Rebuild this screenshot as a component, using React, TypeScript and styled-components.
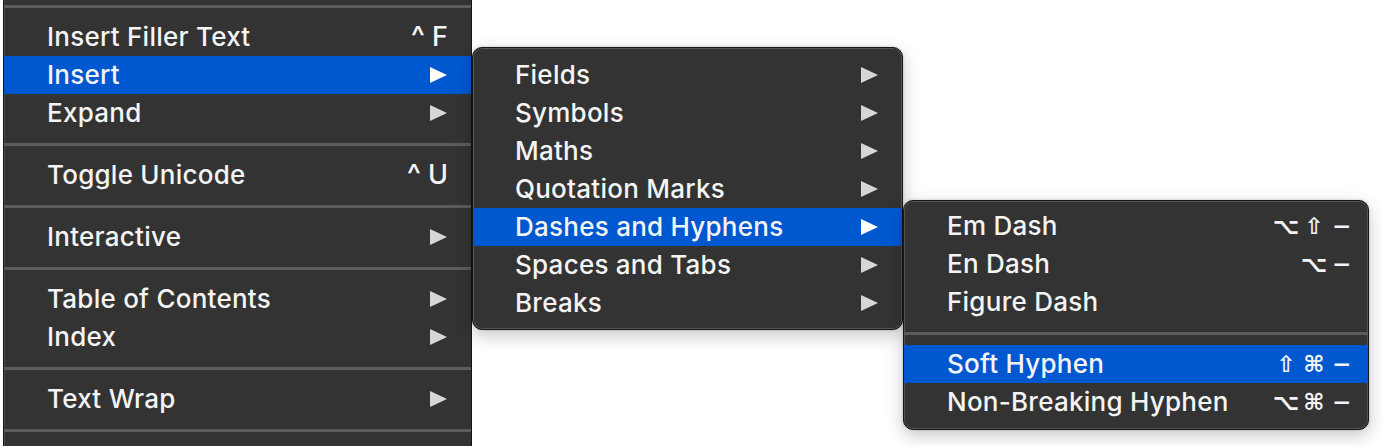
import styled, { createGlobalStyle } from "styled-components";

const GlobalStyle = createGlobalStyle`
  html, body {
    margin: 0;
    padding: 0;
    background: #ffffff;
  }
  body {
    font-family: "Inter", "Noto Sans", "DejaVu Sans", sans-serif;
    -webkit-font-smoothing: antialiased;
  }
`;

type Row =
  | { kind: "sep" }
  | { kind: "item"; label: string; keys?: string[]; sub?: boolean; active?: boolean };

const mainRows: Row[] = [
  { kind: "sep" },
  { kind: "item", label: "Insert Filler Text", keys: ["^", "F"] },
  { kind: "item", label: "Insert", sub: true, active: true },
  { kind: "item", label: "Expand", sub: true },
  { kind: "sep" },
  { kind: "item", label: "Toggle Unicode", keys: ["^", "U"] },
  { kind: "sep" },
  { kind: "item", label: "Interactive", sub: true },
  { kind: "sep" },
  { kind: "item", label: "Table of Contents", sub: true },
  { kind: "item", label: "Index", sub: true },
  { kind: "sep" },
  { kind: "item", label: "Text Wrap", sub: true },
  { kind: "sep" },
  { kind: "item", label: "" },
];

const insertRows: Row[] = [
  { kind: "item", label: "Fields", sub: true },
  { kind: "item", label: "Symbols", sub: true },
  { kind: "item", label: "Maths", sub: true },
  { kind: "item", label: "Quotation Marks", sub: true },
  { kind: "item", label: "Dashes and Hyphens", sub: true, active: true },
  { kind: "item", label: "Spaces and Tabs", sub: true },
  { kind: "item", label: "Breaks", sub: true },
];

const dashRows: Row[] = [
  { kind: "item", label: "Em Dash", keys: ["⌥", "⇧", "−"] },
  { kind: "item", label: "En Dash", keys: ["⌥", "−"] },
  { kind: "item", label: "Figure Dash" },
  { kind: "sep" },
  { kind: "item", label: "Soft Hyphen", keys: ["⇧", "⌘", "−"], active: true },
  { kind: "item", label: "Non-Breaking Hyphen", keys: ["⌥", "⌘", "−"] },
];

function Arrow() {
  return (
    <ArrowSvg width="17" height="16" viewBox="0 0 17 16">
      <polygon points="0,0 17,8 0,16" fill="currentColor" />
    </ArrowSvg>
  );
}

function Keys({ keys, caret }: { keys: string[]; caret: boolean }) {
  if (caret) {
    return (
      <KeyGroup>
        <Caret>^</Caret>
        <Letter>{keys[1]}</Letter>
      </KeyGroup>
    );
  }
  return (
    <KeyGroup>
      {keys.map((k, i) => (
        <Glyph key={i} $last={i === keys.length - 1}>
          {k}
        </Glyph>
      ))}
    </KeyGroup>
  );
}

function MenuRows({ rows }: { rows: Row[] }) {
  return (
    <>
      {rows.map((r, i) =>
        r.kind === "sep" ? (
          <Separator key={i}>
            <Line />
          </Separator>
        ) : (
          <Item key={i} $active={!!r.active}>
            <Label>{r.label}</Label>
            {r.keys && <Keys keys={r.keys} caret={r.keys[0] === "^"} />}
            {r.sub && <Arrow />}
          </Item>
        )
      )}
    </>
  );
}

export default function App() {
  return (
    <>
      <GlobalStyle />
      <Stage>
        <MainMenu>
          <MenuRows rows={mainRows} />
        </MainMenu>
        <SubMenu $top={47} $width={431} $pad="8px 0 7px" $indent={42} $right={23}>
          <MenuRows rows={insertRows} />
        </SubMenu>
        <SubMenu $top={200} $width={466} $pad="6px 0 8px" $indent={43} $right={20}>
          <MenuRows rows={dashRows} />
        </SubMenu>
      </Stage>
    </>
  );
}

const Stage = styled.div`
  width: 1382px;
  height: 446px;
  overflow: hidden;
  display: flex;
  align-items: flex-start;
  padding-left: 3px;
  box-sizing: border-box;
`;

const MainMenu = styled.div`
  --indent: 43px;
  --right: 23px;
  width: 469px;
  height: 480px;
  margin-top: -6px;
  flex-shrink: 0;
  box-sizing: border-box;
  background: #333333;
  border-left: 1px solid #141414;
  border-right: 1px solid #141414;
  box-shadow: inset 1px 0 0 #4a4a4a;
`;

const SubMenu = styled.div<{
  $top: number;
  $width: number;
  $pad: string;
  $indent: number;
  $right: number;
}>`
  --indent: ${(p) => p.$indent}px;
  --right: ${(p) => p.$right}px;
  position: relative;
  z-index: 1;
  flex-shrink: 0;
  margin-top: ${(p) => p.$top}px;
  width: ${(p) => p.$width}px;
  box-sizing: border-box;
  padding: ${(p) => p.$pad};
  background: #333333;
  border: 1px solid #161616;
  border-radius: 10px;
  overflow: hidden;
  box-shadow: inset 0 0 0 1px #555555, 0 6px 18px rgba(0, 0, 0, 0.22),
    0 0 3px rgba(0, 0, 0, 0.18);
`;

const Item = styled.div<{ $active: boolean }>`
  height: 38px;
  display: flex;
  align-items: center;
  padding: 0 var(--right) 0 var(--indent);
  background: ${(p) => (p.$active ? "#0058d0" : "transparent")};
  color: ${(p) => (p.$active ? "#ffffff" : "#d6d6d6")};
`;

const Label = styled.span`
  flex: 1;
  font-size: 26px;
  font-weight: 500;
  line-height: 38px;
  color: #f4f4f4;
  white-space: nowrap;
  letter-spacing: 0.25px;
`;

const ArrowSvg = styled.svg`
  display: block;
  margin-right: 1px;
`;

const KeyGroup = styled.span`
  display: flex;
  align-items: center;
  color: #f4f4f4;
`;

const Caret = styled.span`
  font-size: 30px;
  font-weight: 500;
  line-height: 38px;
  margin-right: 7px;
  transform: translateY(-1px);
`;

const Letter = styled.span`
  font-size: 27px;
  font-weight: 500;
  line-height: 38px;
`;

const Glyph = styled.span<{ $last: boolean }>`
  font-family: "DejaVu Sans", sans-serif;
  font-size: 23px;
  font-weight: 700;
  line-height: 38px;
  width: ${(p) => (p.$last ? "16px" : "28px")};
  margin-left: ${(p) => (p.$last ? "4px" : "0")};
  text-align: center;
  white-space: nowrap;
`;

const Separator = styled.div`
  height: 24px;
  display: flex;
  align-items: center;
`;

const Line = styled.div`
  flex: 1;
  height: 3px;
  background: #5c5c5c;
`;
